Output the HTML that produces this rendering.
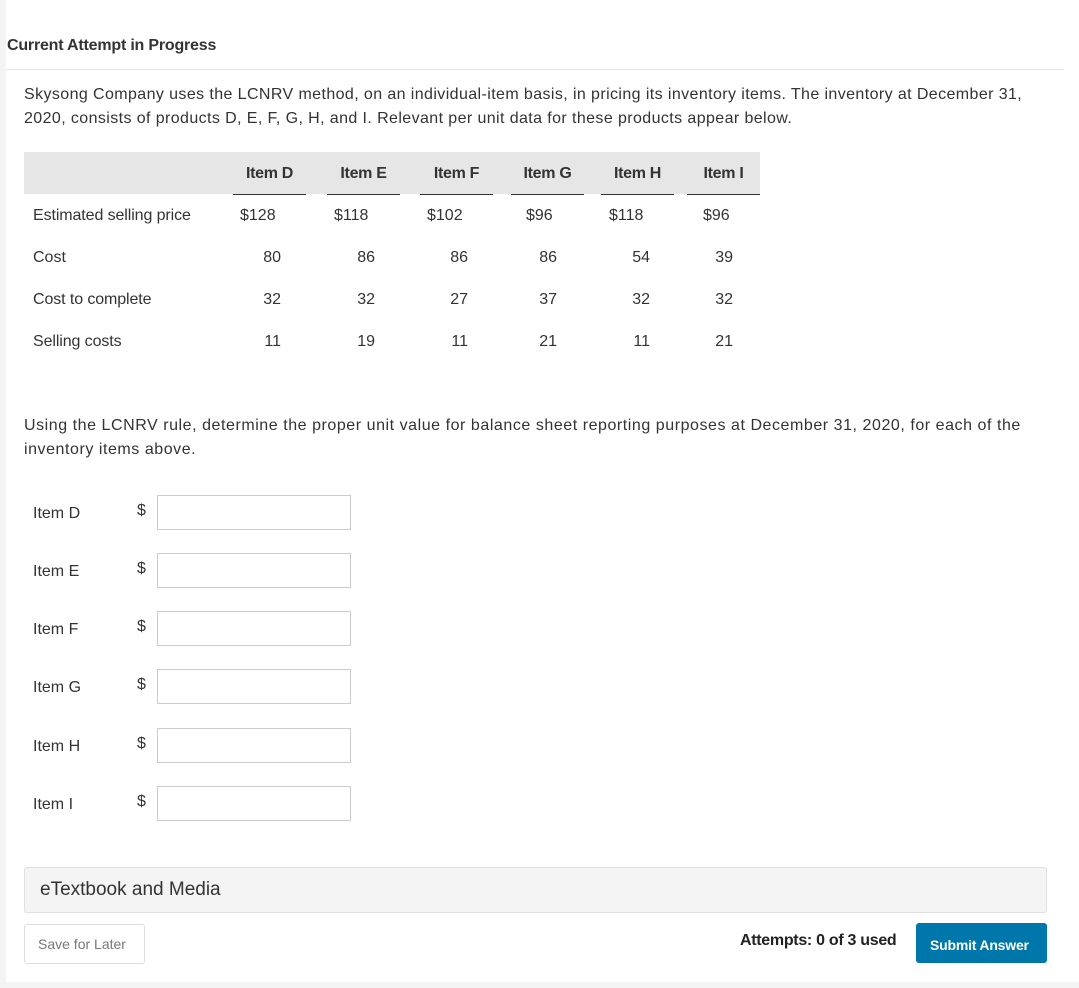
<!DOCTYPE html>
<html><head><style>
body{margin:0;width:1079px;height:988px;background:#f4f4f4;font-family:"Liberation Sans",sans-serif;color:#333;position:relative;overflow:hidden}
.page{position:absolute;left:6px;top:0;width:1073px;height:982px;background:#fff}
.a{position:absolute;white-space:nowrap}
.t{font-size:16px;color:#333}
.hd{position:absolute;top:152px;left:24px;width:736px;height:42px;background:#e6e6e6}
.ul{position:absolute;top:194px;height:1px;background:#333;width:73px}
.c{position:absolute;font-size:16px;text-align:right;width:60px}
.h{position:absolute;font-size:16px;font-weight:bold;top:165px;width:73px;text-align:center;letter-spacing:-0.3px}
.in{position:absolute;left:157px;width:192px;height:33px;border:1px solid #ccc;background:#fff}
.p{letter-spacing:-0.1px}
</style></head><body><div class="page"></div>
<div class="a" style="left:7px;top:37px;font-size:16px;font-weight:bold;color:#333;letter-spacing:-0.2px">Current Attempt in Progress</div>
<div style="position:absolute;left:6px;top:69px;width:1058px;height:1px;background:#e6e6e6"></div>
<div class="a t" style="left:24px;top:83px;line-height:24px;letter-spacing:0.4px">Skysong Company uses the LCNRV method, on an individual-item basis, in pricing its inventory items. The inventory at December 31,<br>2020, consists of products D, E, F, G, H, and I. Relevant per unit data for these products appear below.</div>
<div class="hd"></div>
<div class="h" style="left:233px">Item D</div><div class="h" style="left:327px">Item E</div><div class="h" style="left:420px">Item F</div><div class="h" style="left:511px">Item G</div><div class="h" style="left:601px">Item H</div><div class="h" style="left:687px">Item I</div>
<div class="ul" style="left:233px"></div><div class="ul" style="left:327px"></div><div class="ul" style="left:420px"></div><div class="ul" style="left:511px"></div><div class="ul" style="left:601px"></div><div class="ul" style="left:687px"></div>
<div class="a t p" style="left:33px;top:207px">Estimated selling price</div>
<div class="a t" style="left:33px;top:249px">Cost</div>
<div class="a t p" style="left:33px;top:291px">Cost to complete</div>
<div class="a t p" style="left:33px;top:333px">Selling costs</div>
<div class="a t" style="left:240px;top:207px">$128</div><div class="a t" style="left:334px;top:207px">$118</div><div class="a t" style="left:427px;top:207px">$102</div><div class="a t" style="left:526px;top:207px">$96</div><div class="a t" style="left:609px;top:207px">$118</div><div class="a t" style="left:703px;top:207px">$96</div>
<div class="c" style="left:221px;top:249px">80</div><div class="c" style="left:315px;top:249px">86</div><div class="c" style="left:408px;top:249px">86</div><div class="c" style="left:497px;top:249px">86</div><div class="c" style="left:590px;top:249px">54</div><div class="c" style="left:673px;top:249px">39</div>
<div class="c" style="left:221px;top:291px">32</div><div class="c" style="left:315px;top:291px">32</div><div class="c" style="left:408px;top:291px">27</div><div class="c" style="left:497px;top:291px">37</div><div class="c" style="left:590px;top:291px">32</div><div class="c" style="left:673px;top:291px">32</div>
<div class="c" style="left:221px;top:333px">11</div><div class="c" style="left:315px;top:333px">19</div><div class="c" style="left:408px;top:333px">11</div><div class="c" style="left:497px;top:333px">21</div><div class="c" style="left:590px;top:333px">11</div><div class="c" style="left:673px;top:333px">21</div>
<div class="a t" style="left:24px;top:414px;line-height:24px;letter-spacing:0.55px">Using the LCNRV rule, determine the proper unit value for balance sheet reporting purposes at December 31, 2020, for each of the<br>inventory items above.</div>
<div class="a t" style="left:33px;top:505px">Item D</div><div class="a t" style="left:137px;top:502px">$</div><div class="in" style="top:495px"></div>
<div class="a t" style="left:33px;top:563px">Item E</div><div class="a t" style="left:137px;top:560px">$</div><div class="in" style="top:553px"></div>
<div class="a t" style="left:33px;top:621px">Item F</div><div class="a t" style="left:137px;top:618px">$</div><div class="in" style="top:611px"></div>
<div class="a t" style="left:33px;top:679px">Item G</div><div class="a t" style="left:137px;top:676px">$</div><div class="in" style="top:669px"></div>
<div class="a t" style="left:33px;top:738px">Item H</div><div class="a t" style="left:137px;top:735px">$</div><div class="in" style="top:728px"></div>
<div class="a t" style="left:33px;top:796px">Item I</div><div class="a t" style="left:137px;top:793px">$</div><div class="in" style="top:786px"></div>
<div style="position:absolute;left:24px;top:867px;width:1021px;height:44px;background:#f4f4f4;border:1px solid #e0e0e0;border-radius:3px"></div>
<div class="a" style="left:40px;top:879px;font-size:19px;color:#333">eTextbook and Media</div>
<div style="position:absolute;left:24px;top:924px;width:119px;height:38px;border:1px solid #ddd;border-radius:3px;background:#fff"></div>
<div class="a" style="left:38px;top:936px;font-size:14px;color:#777">Save for Later</div>
<div class="a" style="left:740px;top:932px;font-size:16px;font-weight:bold;color:#222;letter-spacing:-0.3px">Attempts: 0 of 3 used</div>
<div style="position:absolute;left:916px;top:923px;width:131px;height:40px;background:#0077aa;border-radius:3px"></div>
<div class="a" style="left:930px;top:937px;font-size:14px;color:#fff;font-weight:bold;letter-spacing:-0.2px">Submit Answer</div>
</body></html>
